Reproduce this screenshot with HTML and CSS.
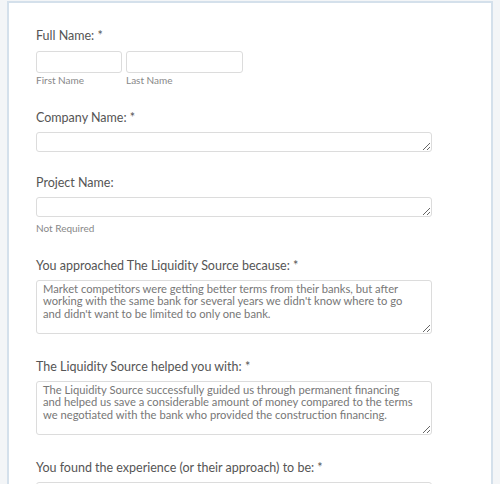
FILE: index.html
```html
<!DOCTYPE html>
<html>
<head>
<meta charset="utf-8">
<link rel="stylesheet" href="styles.css">
</head>
<body>
<div class="card">
  <div class="field">
    <label class="label">Full Name: *</label>
    <div class="name-row">
      <div class="name-col">
        <input class="input first" type="text">
        <span class="sub">First Name</span>
      </div>
      <div class="name-col">
        <input class="input last" type="text">
        <span class="sub">Last Name</span>
      </div>
    </div>
  </div>
  <div class="field">
    <label class="label">Company Name: *</label>
    <textarea class="ta short"></textarea>
  </div>
  <div class="field">
    <label class="label">Project Name:</label>
    <textarea class="ta short"></textarea>
    <span class="sub note">Not Required</span>
  </div>
  <div class="field tallfield">
    <label class="label">You approached The Liquidity Source because: *</label>
    <textarea class="ta tall">Market competitors were getting better terms from their banks, but after working with the same bank for several years we didn't know where to go and didn't want to be limited to only one bank.</textarea>
  </div>
  <div class="field tallfield">
    <label class="label">The Liquidity Source helped you with: *</label>
    <textarea class="ta tall">The Liquidity Source successfully guided us through permanent financing and helped us save a considerable amount of money compared to the terms we negotiated with the bank who provided the construction financing.</textarea>
  </div>
  <div class="field tallfield">
    <label class="label">You found the experience (or their approach) to be: *</label>
    <textarea class="ta tall"></textarea>
  </div>
</div>
</body>
</html>
```
FILE: styles.css
```css
html, body {
  margin: 0;
  padding: 0;
  background: #f3f5f7;
  overflow: hidden;
  height: 484px;
}
body {
  font-family: "Lato", "Noto Sans", sans-serif;
}
.card {
  margin: 1px 0 0 7px;
  width: 486px;
  min-height: 600px;
  background: #fff;
  border: 2px solid #d4e0eb;
  border-bottom: none;
  padding: 23px 0 0 27px;
  box-sizing: border-box;
}
.field {
  display: flex;
  flex-direction: column;
  align-items: flex-start;
  margin-bottom: 21px;
}
.tallfield {
  margin-bottom: 23px;
}
.label {
  font-size: 12.5px;
  line-height: 18px;
  color: #555;
  padding-top: 1px;
  margin-bottom: 5px;
}
.name-row {
  display: flex;
  gap: 4px;
  margin-top: 1px;
}
.name-col {
  display: flex;
  flex-direction: column;
}
.input {
  height: 22px;
  box-sizing: border-box;
  border: 1px solid #dcdcdc;
  border-radius: 3px;
  margin: 0;
  padding: 0 6px;
  background: #fff;
}
.first { width: 86px; }
.last { width: 117px; }
.sub {
  font-size: 10px;
  line-height: 14px;
  color: #888;
  margin-top: 0;
}
.note {
  margin-top: 4px;
}
.ta {
  display: block;
  width: 396px;
  box-sizing: border-box;
  border: 1px solid #dcdcdc;
  border-radius: 3px;
  margin: 0;
  padding: 2px 11px 2px 6px;
  font-family: "Lato", "Noto Sans", sans-serif;
  font-size: 11.2px;
  line-height: 12.3px;
  color: #777;
  background: #fff;
  resize: vertical;
  overflow: hidden;
}
.short { height: 20px; }
.tall { height: 54px; }
```
